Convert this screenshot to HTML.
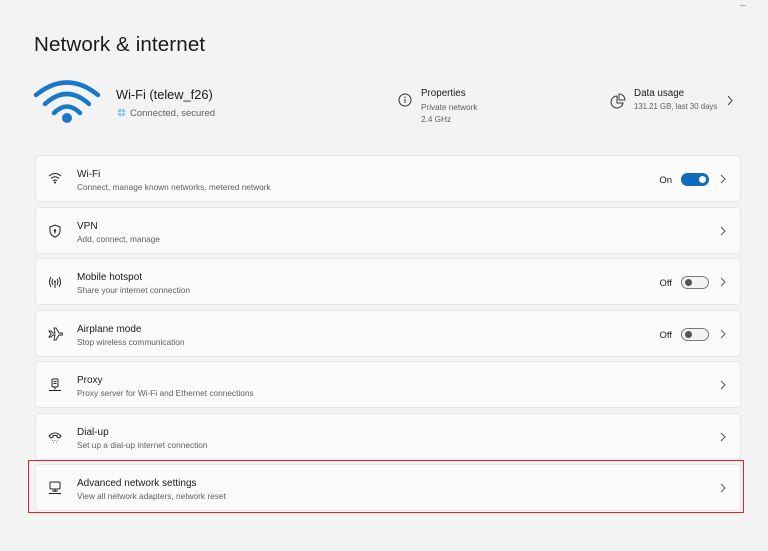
<!DOCTYPE html>
<html><head><meta charset="utf-8"><style>
*{margin:0;padding:0;box-sizing:border-box}
body{width:768px;height:551px;background:#f3f3f3;font-family:"Liberation Sans",sans-serif;color:#1b1b1b;position:relative;overflow:hidden}
.abs{position:absolute}
h1{position:absolute;left:34px;top:33px;font-size:20.6px;font-weight:normal;letter-spacing:0.1px}
.card{position:absolute;left:35px;width:706px;height:47px;background:#fbfbfb;border:1px solid #e6e6e6;border-radius:4px}
.card .t{position:absolute;left:41px;top:13px;font-size:10px;color:#1b1b1b}
.card .s{position:absolute;left:41px;top:26px;font-size:8.3px;color:#5f5f5f}
.card svg.ic{position:absolute;left:12px;top:16px}
.chev{position:absolute;right:14px;top:18px}
.lbl{position:absolute;right:68px;top:19px;font-size:9.5px}
.tg{position:absolute;right:31px;top:17px;width:28px;height:13px;border-radius:7px}
.on{background:#0f6cbd}
.on:after{content:"";position:absolute;right:3px;top:3px;width:7px;height:7px;border-radius:50%;background:#fff}
.off{border:1px solid #7a7a7a;background:#f3f3f3}
.off:after{content:"";position:absolute;left:3px;top:2px;width:7px;height:7px;border-radius:50%;background:#555}
</style></head><body>
<div class="abs" style="left:740px;top:0;font-size:10px;color:#888">–</div>
<h1>Network &amp; internet</h1>
<svg class="abs" style="left:33px;top:76px" width="68" height="50" viewBox="0 0 68 50">
<g fill="none" stroke="#1a78c8" stroke-width="4.5" stroke-linecap="round">
<path d="M3 19 Q34 -6 65 19"/><path d="M12 28 Q34 8 56 28"/><path d="M21 37 Q34 24 47 37"/></g>
<circle cx="34" cy="42" r="5" fill="#1a78c8"/></svg>
<div class="abs" style="left:116px;top:87px;font-size:12.8px">Wi-Fi (telew_f26)</div>
<svg class="abs" style="left:117px;top:108px" width="9" height="9"><circle cx="4.5" cy="4.5" r="4" fill="#8ec5e6"/><path d="M0.5 4.5h8M4.5 0.5v8" stroke="#fff" stroke-width=".8"/></svg>
<div class="abs" style="left:130px;top:108px;font-size:9.5px;color:#5f5f5f">Connected, secured</div>
<svg class="abs" style="left:398px;top:93px" width="14" height="14"><circle cx="7" cy="7" r="6" fill="none" stroke="#333" stroke-width="1"/><path d="M7 6v4" stroke="#333"/><circle cx="7" cy="4.2" r=".7" fill="#333"/></svg>
<div class="abs" style="left:421px;top:88px;font-size:9.8px">Properties</div>
<div class="abs" style="left:421px;top:102px;font-size:8.2px;color:#5f5f5f;line-height:11.5px">Private network<br>2.4 GHz</div>
<svg class="abs" style="left:610px;top:93px" width="16" height="16"><path d="M7 3a6 6 0 1 0 6 7H7z" fill="none" stroke="#333"/><path d="M9 1v6h6a6 6 0 0 0-6-6z" fill="none" stroke="#333"/></svg>
<div class="abs" style="left:634px;top:88px;font-size:9.8px">Data usage</div>
<div class="abs" style="left:634px;top:102px;font-size:7.8px;color:#5f5f5f">131.21 GB, last 30 days</div>
<svg class="abs" style="left:726px;top:95px" width="8" height="11"><path d="M2 1l4 4.5L2 10" fill="none" stroke="#444" stroke-width="1"/></svg>

<div class="card" style="top:155px"><svg class="ic" width="14" height="12"><g fill="none" stroke="#222" stroke-width="1"><path d="M1 4Q7-1 13 4"/><path d="M3 6.5Q7 3 11 6.5"/><path d="M5 9Q7 7 9 9"/></g><circle cx="7" cy="10.5" r="1" fill="#222"/></svg>
<div class="t">Wi-Fi</div><div class="s">Connect, manage known networks, metered network</div>
<div class="lbl">On</div><div class="tg on"></div>
<svg class="chev" width="6" height="10"><path d="M1 1l4 4-4 4" fill="none" stroke="#555"/></svg></div>

<div class="card" style="top:207px"><svg class="ic" width="14" height="14"><path d="M7 1L2 3v4c0 3 2.5 5 5 6 2.5-1 5-3 5-6V3z" fill="none" stroke="#222"/><circle cx="7" cy="6.5" r="1.2" fill="#222"/><path d="M7 7v2.5" stroke="#222"/></svg>
<div class="t">VPN</div><div class="s">Add, connect, manage</div>
<svg class="chev" width="6" height="10"><path d="M1 1l4 4-4 4" fill="none" stroke="#555"/></svg></div>

<div class="card" style="top:258px"><svg class="ic" width="14" height="14"><g fill="none" stroke="#222"><path d="M3 2Q0 7 3 12M11 2q3 5 0 10M5 4q-2 3 0 6M9 4q2 3 0 6M7 7v6"/></g><circle cx="7" cy="6.5" r="1" fill="#222"/></svg>
<div class="t">Mobile hotspot</div><div class="s">Share your internet connection</div>
<div class="lbl">Off</div><div class="tg off"></div>
<svg class="chev" width="6" height="10"><path d="M1 1l4 4-4 4" fill="none" stroke="#555"/></svg></div>

<div class="card" style="top:310px"><svg class="ic" width="15" height="14"><path d="M1 4l2 3-2 3h2l2-2h2l-1 5h2l3-5h3a1 1 0 0 0 0-2h-3L8 1H6l1 5H5L3 4z" fill="none" stroke="#222" stroke-width=".9"/></svg>
<div class="t">Airplane mode</div><div class="s">Stop wireless communication</div>
<div class="lbl">Off</div><div class="tg off"></div>
<svg class="chev" width="6" height="10"><path d="M1 1l4 4-4 4" fill="none" stroke="#555"/></svg></div>

<div class="card" style="top:361px"><svg class="ic" width="14" height="14"><g fill="none" stroke="#222"><rect x="4" y="1" width="6" height="8" rx="1"/><path d="M5.5 3.5h3M5.5 5.5h3M7 9v2.5M1 12.5h12"/></g></svg>
<div class="t">Proxy</div><div class="s">Proxy server for Wi-Fi and Ethernet connections</div>
<svg class="chev" width="6" height="10"><path d="M1 1l4 4-4 4" fill="none" stroke="#555"/></svg></div>

<div class="card" style="top:413px"><svg class="ic" width="14" height="14"><g fill="none" stroke="#222"><path d="M1 6q6-6 12 0l-2 2-2-1V5.5H5V7L3 8z"/><path d="M4 10.5h0.5M6.7 10.5h.6M9.5 10.5h.5M5.5 12.5h.5M8 12.5h.5"/></g></svg>
<div class="t">Dial-up</div><div class="s">Set up a dial-up internet connection</div>
<svg class="chev" width="6" height="10"><path d="M1 1l4 4-4 4" fill="none" stroke="#555"/></svg></div>

<div class="card" style="top:464px"><svg class="ic" width="14" height="14"><g fill="none" stroke="#222"><rect x="2" y="1" width="10" height="7" rx="1"/><path d="M7 8v3M1 12.5h12M4 10h6"/></g></svg>
<div class="t">Advanced network settings</div><div class="s">View all network adapters, network reset</div>
<svg class="chev" width="6" height="10"><path d="M1 1l4 4-4 4" fill="none" stroke="#555"/></svg></div>

<div class="abs" style="left:28px;top:460px;width:716px;height:53px;border:1.5px solid #e8202a"></div>
</body></html>
